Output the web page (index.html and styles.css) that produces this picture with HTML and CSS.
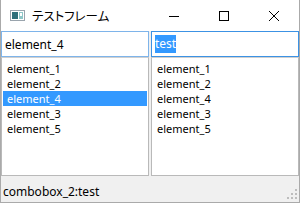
FILE: index.html
```html
<!DOCTYPE html>
<html lang="ja">
<head>
    <meta charset="UTF-8">
    <title>テストフレーム</title>
    <link rel="stylesheet" href="styles.css">
</head>
<body>
    <div class="window">
        <div class="titlebar">
            <svg class="app-icon" width="15" height="11" viewBox="0 0 15 11">
                <rect x="0.5" y="0.5" width="14" height="10" fill="#fff" stroke="#9aa4ad"/>
                <rect x="2" y="2" width="6" height="7" fill="#2e6f7a"/>
                <rect x="9" y="2" width="4" height="7" fill="#8fc7c8"/>
                <rect x="10" y="3" width="2" height="3" fill="#fff"/>
            </svg>
            <span class="title">テストフレーム</span>
            <div class="caption">
                <div class="cap-btn">
                    <svg width="10" height="10" viewBox="0 0 10 10"><path d="M0 5.5H10" stroke="#000" stroke-width="1"/></svg>
                </div>
                <div class="cap-btn">
                    <svg width="10" height="10" viewBox="0 0 10 10"><rect x="0.5" y="0.5" width="9" height="9" fill="none" stroke="#000"/></svg>
                </div>
                <div class="cap-btn">
                    <svg width="10" height="10" viewBox="0 0 10 10"><path d="M0 0L10 10M10 0L0 10" stroke="#000" stroke-width="1"/></svg>
                </div>
            </div>
        </div>
        <div class="panels">
            <div class="panel">
                <div class="field">element_4</div>
                <ul class="list">
                    <li>element_1</li>
                    <li>element_2</li>
                    <li class="selected">element_4</li>
                    <li>element_3</li>
                    <li>element_5</li>
                </ul>
            </div>
            <div class="panel">
                <div class="field focused"><span class="sel-text">test</span></div>
                <ul class="list">
                    <li>element_1</li>
                    <li>element_2</li>
                    <li>element_4</li>
                    <li>element_3</li>
                    <li>element_5</li>
                </ul>
            </div>
        </div>
        <div class="statusbar">
            <span>combobox_2:test</span>
            <svg class="grip" width="11" height="11" viewBox="0 0 11 11">
                <rect x="8" y="0" width="2" height="2" fill="#bdbdbd"/>
                <rect x="4" y="4" width="2" height="2" fill="#bdbdbd"/>
                <rect x="8" y="4" width="2" height="2" fill="#bdbdbd"/>
                <rect x="0" y="8" width="2" height="2" fill="#bdbdbd"/>
                <rect x="4" y="8" width="2" height="2" fill="#bdbdbd"/>
                <rect x="8" y="8" width="2" height="2" fill="#bdbdbd"/>
            </svg>
        </div>
    </div>
</body>
</html>
```

FILE: styles.css
```css
body {
    margin: 0;
    font-family: "Noto Sans", Arial, sans-serif;
    font-size: 12px;
    color: #000;
}
.window {
    width: 300px;
    height: 203px;
    box-sizing: border-box;
    border: 1px solid #aaa;
    border-top: none;
    display: flex;
    flex-direction: column;
    background-color: #f0f0f0;
}
.titlebar {
    height: 31px;
    display: flex;
    align-items: center;
    background-color: #fff;
}
.app-icon {
    margin-left: 9px;
    margin-right: 7px;
}
.title {
    font-family: "Noto Sans CJK JP", sans-serif;
    font-size: 12.5px;
    font-feature-settings: "palt";
    flex: 1;
}
.caption {
    display: flex;
    height: 100%;
}
.cap-btn {
    width: 50px;
    display: flex;
    align-items: center;
    justify-content: center;
}
.panels {
    height: 145px;
    display: grid;
    grid-template-columns: 1fr 1fr;
    gap: 2px;
}
.panel {
    display: flex;
    flex-direction: column;
    min-height: 0;
}
.field {
    height: 26px;
    box-sizing: border-box;
    border: 1px solid #7eb4ea;
    background-color: #fff;
    padding: 0 3px;
    display: flex;
    align-items: center;
}
.field.focused {
    border-color: #3c92e4;
}
.sel-text {
    background-color: #3399ff;
    color: #fff;
    line-height: 18px;
}
.list {
    flex: 1;
    margin: 0;
    padding: 3px 1px 0;
    list-style: none;
    background-color: #fff;
    border: 1px solid #b9b9b9;
    border-top-color: #d0d0d0;
    font-size: 11px;
}
.list li {
    height: 15px;
    line-height: 15px;
    padding-left: 4px;
}
.list li.selected {
    background-color: #3399ff;
    color: #fff;
}
.statusbar {
    flex: 1;
    display: flex;
    align-items: center;
    justify-content: space-between;
    padding: 4px 1px 0 2px;
}
.grip {
    align-self: flex-end;
    margin-bottom: 2px;
}
```
